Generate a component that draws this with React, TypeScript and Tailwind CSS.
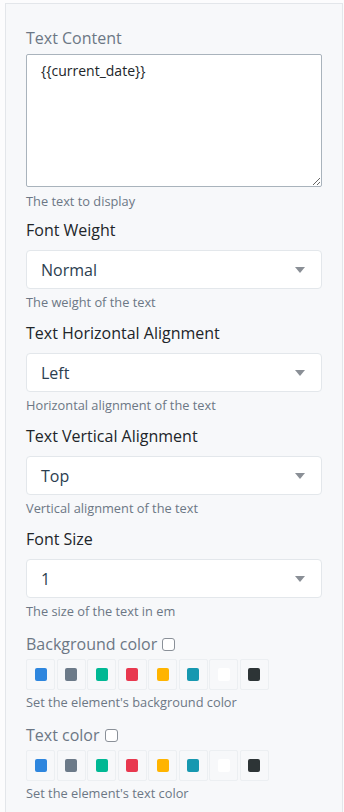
const font = { fontFamily: '"Open Sans", "Noto Sans", sans-serif' };

const swatches = ["#2e86de", "#6c7a89", "#00b894", "#e8384f", "#ffb400", "#1798b0", "#ffffff", "#2d3436"];

function Caret() {
  return (
    <svg width="10" height="6" viewBox="0 0 10 6" className="shrink-0">
      <path d="M0 0 L10 0 L5 6 Z" fill="#8a8f96" />
    </svg>
  );
}

function SelectField({ label, value, help }: { label: string; value: string; help: string }) {
  return (
    <div className="flex flex-col">
      <label className="text-[16px] leading-[24px] text-[#212529]">{label}</label>
      <div className="mt-2 flex h-[39px] items-center justify-between rounded-[4px] border border-[#e3e7eb] bg-white pl-[14px] pr-[16px]">
        <span className="text-[16px] text-[#2c3e50]">{value}</span>
        <Caret />
      </div>
      <p className="mt-[3px] text-[12.8px] leading-[20px] text-[#6c7785]">{help}</p>
    </div>
  );
}

function ColorField({ label, help }: { label: string; help: string }) {
  return (
    <div className="flex flex-col">
      <div className="flex items-center gap-[5px]">
        <span className="text-[16px] leading-[24px] text-[#6c7785]">{label}</span>
        <span className="h-[13px] w-[13px] rounded-[3px] border border-[#8a9098] bg-white" />
      </div>
      <div className="mt-[3px] flex gap-[1.5px]">
        {swatches.map((c) => (
          <div key={c} className="flex h-[31px] w-[29px] items-center justify-center rounded-[2px] border border-[#eceff2] bg-[#f7f8fa]">
            <div className="h-[13px] w-[12px] rounded-[2px]" style={{ backgroundColor: c }} />
          </div>
        ))}
      </div>
      <p className="mt-[2px] text-[12.8px] leading-[20px] text-[#6c7785]">{help}</p>
    </div>
  );
}

export default function App() {
  return (
    <div className="min-h-screen bg-[#fcfcfd] pt-[3px] pl-[5px] pr-[1px]" style={font}>
      <div className="min-h-[809px] border border-b-0 border-[#e3e6ea] bg-[#f7f8fa] px-5 pt-[22px]">
        <div className="flex flex-col">
          <label className="text-[16px] leading-[24px] text-[#6c7785]">Text Content</label>
          <textarea
            defaultValue="{{current_date}}"
            className="mt-[4px] h-[133px] w-full rounded-[2px] border border-[#a9b3bc] bg-white px-[14px] py-[5px] text-[14px] leading-[22px] text-[#212529] outline-none"
            style={font}
          />
          <p className="mt-[4px] text-[12.8px] leading-[20px] text-[#6c7785]">The text to display</p>
        </div>
        <div className="mt-[7px] flex flex-col gap-[9px]">
          <SelectField label="Font Weight" value="Normal" help="The weight of the text" />
          <SelectField label="Text Horizontal Alignment" value="Left" help="Horizontal alignment of the text" />
          <SelectField label="Text Vertical Alignment" value="Top" help="Vertical alignment of the text" />
          <SelectField label="Font Size" value="1" help="The size of the text in em" />
        </div>
        <div className="mt-[11px] flex flex-col gap-[11px]">
          <ColorField label="Background color" help="Set the element's background color" />
          <ColorField label="Text color" help="Set the element's text color" />
        </div>
      </div>
    </div>
  );
}
